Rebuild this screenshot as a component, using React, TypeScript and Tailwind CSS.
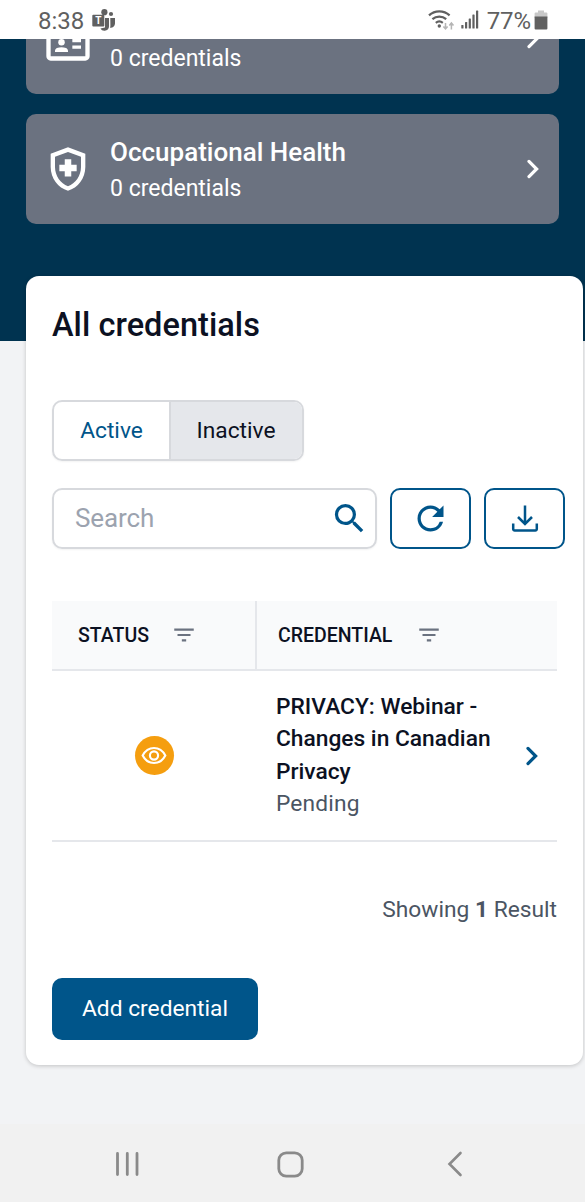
import type { ReactNode } from 'react';
import { MdFilterList, MdOutlineBadge, MdOutlineHealthAndSafety, MdRefresh, MdSearch } from 'react-icons/md';

interface Category {
  id: string;
  title?: string;
  count: number;
  icon: ReactNode;
}

interface Credential {
  id: string;
  name: string;
  status: string;
}

const categories: Category[] = [
  // Scrolled under the status bar, only its count line shows
  { id: 'badge', count: 0, icon: <MdOutlineBadge size={52} /> },
  { id: 'health', title: 'Occupational Health', count: 0, icon: <MdOutlineHealthAndSafety size={52} /> },
];

const credentials: Credential[] = [
  { id: 'privacy', name: 'PRIVACY: Webinar - Changes in Canadian Privacy', status: 'Pending' },
];

function Chevron({ className }: { className?: string }) {
  return (
    <svg width="12" height="20" viewBox="0 0 12 20" fill="none" className={className}>
      <path d="M2 2.4 9.6 10 2 17.6" stroke="currentColor" strokeWidth="3.2" strokeLinecap="round" />
    </svg>
  );
}

function TeamsIcon() {
  return (
    <svg width="24" height="22" viewBox="0 0 24 22" fill="#606060">
      <circle cx="12.4" cy="3.2" r="3.1" />
      <circle cx="19" cy="5" r="2.1" />
      <path d="M13 9h4v8a4.6 4.6 0 0 1-8.6 2.4L13 18.6z" />
      <path d="M18.3 9H23v5.6a4.2 4.2 0 0 1-5 4.1c.4-.8.4-1.4.4-2.2z" />
      <rect x="0.3" y="5.8" width="12" height="11.6" rx="1" />
      <text x="6.3" y="15.2" textAnchor="middle" fontSize="10" fontWeight="700" fontFamily="Roboto" fill="#fff">T</text>
    </svg>
  );
}

function WifiIcon() {
  return (
    <svg width="27" height="20" viewBox="0 0 27 20" fill="none" stroke="#606060" strokeWidth="2.2">
      <path d="M1 5.4a15.4 15.4 0 0 1 20.6 0" />
      <path d="M4.4 9.2a10.6 10.6 0 0 1 13.8 0" />
      <path d="M7.8 12.8a5.6 5.6 0 0 1 7 0" />
      <circle cx="11.3" cy="16" r="1.7" fill="#606060" stroke="none" />
      <path d="M17.5 13v5.6M15.4 16.4l2.1 2.4 2.1-2.4M23.4 19.4v-6M21.3 15.4l2.1-2.4 2.1 2.4" stroke="#b5b5b5" strokeWidth="1.5" />
    </svg>
  );
}

function SignalIcon() {
  return (
    <svg width="18" height="19" viewBox="0 0 18 19" fill="#606060">
      <rect x="0.3" y="15" width="2.2" height="3.6" rx="0.6" />
      <rect x="4" y="12" width="2.2" height="6.6" rx="0.6" />
      <rect x="7.7" y="8.5" width="2.2" height="10.1" rx="0.6" />
      <rect x="11.4" y="4.5" width="2.2" height="14.1" rx="0.6" />
      <rect x="15" y="0.6" width="2.2" height="18" rx="0.6" />
    </svg>
  );
}

function BatteryIcon() {
  return (
    <svg width="14" height="20" viewBox="0 0 14 20">
      <path d="M4 .4h6v2.2h2.4a1 1 0 0 1 1 1V8H.6V3.6a1 1 0 0 1 1-1H4z" fill="#c8c8c8" />
      <path d="M.6 6.6h12.8v11.8a1 1 0 0 1-1 1H1.6a1 1 0 0 1-1-1z" fill="#606060" />
    </svg>
  );
}

function DownloadIcon() {
  return (
    <svg width="28" height="28" viewBox="0 0 28 28" fill="none" stroke="currentColor" strokeWidth="2.5">
      <path d="M14 .5V19M7 12l7 7 7-7" />
      <path d="M2.2 18.6v5.5a1.5 1.5 0 0 0 1.5 1.5h20.600a1.500 1.500 0 0 0 1.500-1.500v-5.500" />
    </svg>
  );
}

function PendingBadge() {
  return (
    <span className="flex size-[39px] items-center justify-center rounded-full bg-[#f59e0f]">
      <svg width="26" height="19" viewBox="0 0 28 20" fill="none" stroke="#fff" strokeWidth="2.300">
        <path d="M1.800 10C4.500 4.800 8.700 1.900 14 1.900S23.500 4.800 26.200 10C23.500 15.200 19.300 18.100 14 18.100S4.500 15.200 1.800 10z" />
        <circle cx="14" cy="10" r="4.400" />
      </svg>
    </span>
  );
}

function StatusBar() {
  return (
    <div className="flex h-[39px] shrink-0 items-center bg-white pr-[37px] pl-[38px] text-[#606060]">
      <span className="pt-0.5 text-[24px]">8:38</span>
      <span className="ml-2"><TeamsIcon /></span>
      <span className="ml-auto"><WifiIcon /></span>
      <span className="ml-[6px]"><SignalIcon /></span>
      <span className="ml-2 pt-0.5 text-[24px] tracking-[-0.1px]">77%</span>
      <span className="ml-[3px]"><BatteryIcon /></span>
    </div>
  );
}

function CategoryCard({ category }: { category: Category }) {
  return (
    <div className="flex h-[110px] shrink-0 items-center rounded-[10px] bg-[#6b7280] pr-5 pl-4 text-white">
      {category.icon}
      <div className="ml-4 flex-1 pt-1">
        <div className="h-9 text-[26px] leading-[35px] font-medium">{category.title}</div>
        <div className="text-[23px] leading-9">{category.count} credentials</div>
      </div>
      <Chevron />
    </div>
  );
}

function HeaderCell({ label }: { label: string }) {
  return (
    <>
      <span className="pt-0.5 text-[19.5px] font-medium">{label}</span>
      <MdFilterList size={26} className="text-[#6b7280]" />
    </>
  );
}

function CredentialRow({ credential }: { credential: Credential }) {
  return (
    <div className="grid h-[171px] grid-cols-[204px_1fr] items-center border-b-2 border-[#e5e7eb]">
      <div className="flex justify-center"><PendingBadge /></div>
      <div className="flex items-center justify-between pr-[19px] pl-5">
        <div className="w-[225px] text-[22.75px] leading-[32.5px]">
          <div className="font-medium">{credential.name}</div>
          <div className="tracking-[0.15px] text-[#4b5563]">{credential.status}</div>
        </div>
        <Chevron className="text-[#00558a]" />
      </div>
    </div>
  );
}

function NavBar() {
  return (
    <div className="flex h-[78px] shrink-0 items-center bg-[#f1f1f1] pt-0.5 pl-[115px]">
      <svg width="25" height="26" viewBox="0 0 25 26" stroke="#8a8a8a" strokeWidth="2.8" strokeLinecap="round">
        <path d="M2.5 2.5v21M12.3 2.5v21M22 2.5v21" />
      </svg>
      <svg width="27" height="27" viewBox="0 0 27 27" fill="none" stroke="#8a8a8a" strokeWidth="2.8" className="ml-[137px]">
        <rect x="1.8" y="1.8" width="23.4" height="23.4" rx="7.5" />
      </svg>
      <svg width="16" height="26" viewBox="0 0 16 26" fill="none" stroke="#8a8a8a" strokeWidth="2.6" strokeLinecap="round" className="ml-[143px]">
        <path d="M13.5 2 2.5 13l11 11" />
      </svg>
    </div>
  );
}

export default function App() {
  return (
    <div className="flex h-[1202px] w-[585px] flex-col overflow-hidden bg-[#f2f3f5] font-['Roboto',sans-serif] text-[#0c1122]">
      <StatusBar />

      <main className="flex-1 overflow-hidden">
        <section className="flex h-[302px] flex-col justify-end gap-5 overflow-hidden bg-[#003350] pr-[26px] pb-[117px] pl-[26px]">
          {categories.map(category => (
            <CategoryCard key={category.id} category={category} />
          ))}
        </section>

        <section className="relative -mt-[65px] ml-[26px] h-[789px] w-[557px] rounded-[13px] bg-white pt-[29px] pl-[26px] shadow-[0_1px_4px_rgba(0,0,0,0.2)]">
          <h1 className="text-[32.5px] leading-10 font-medium tracking-[0.05px]">All credentials</h1>

          <div className="mt-[55px] flex h-[61px] w-[252px] overflow-hidden rounded-[10px] border-2 border-[#d7d9dd] text-[22.75px] shadow-xs">
            <button className="w-[115px] pt-0.5 text-[#00558a]">Active</button>
            <button className="flex-1 border-l-2 border-[#d7d9dd] bg-[#e5e7eb] pt-0.5 pr-px">Inactive</button>
          </div>

          <div className="mt-[27px] flex h-[61px] gap-[13px]">
            <div className="flex w-[325px] items-center justify-between rounded-[10px] border-2 border-[#d7d9dd] pr-[6px] pl-[21px] shadow-xs">
              <span className="text-[26px] tracking-[-0.1px] text-[#9ca3af]">Search</span>
              <MdSearch size={39} className="text-[#00558a]" />
            </div>
            <button className="flex w-[81px] items-center justify-center rounded-[10px] border-2 border-[#00558a] text-[#00558a]">
              <MdRefresh size={39} />
            </button>
            <button className="flex w-[81px] items-center justify-center rounded-[10px] border-2 border-[#00558a] text-[#00558a]">
              <DownloadIcon />
            </button>
          </div>

          <div className="mt-[52px] w-[505px]">
            <div className="grid h-[70px] grid-cols-[205px_1fr] border-b-2 border-[#e5e7eb] bg-[#f9fafb]">
              <div className="flex items-center gap-[22px] border-r-2 border-[#e5e7eb] pl-[26px]">
                <HeaderCell label="STATUS" />
              </div>
              <div className="flex items-center gap-6 pl-[21px]">
                <HeaderCell label="CREDENTIAL" />
              </div>
            </div>
            {credentials.map(credential => (
              <CredentialRow key={credential.id} credential={credential} />
            ))}
            <p className="mt-[52px] text-right text-[22.75px] leading-[32px] text-[#4b5563]">
              Showing <span className="font-bold">{credentials.length}</span> Result
            </p>
          </div>

          <button className="mt-[52px] h-[62px] w-[206px] rounded-[10px] bg-[#00558a] text-[22.75px] text-white">
            Add credential
          </button>
        </section>
      </main>

      <NavBar />
    </div>
  );
}
